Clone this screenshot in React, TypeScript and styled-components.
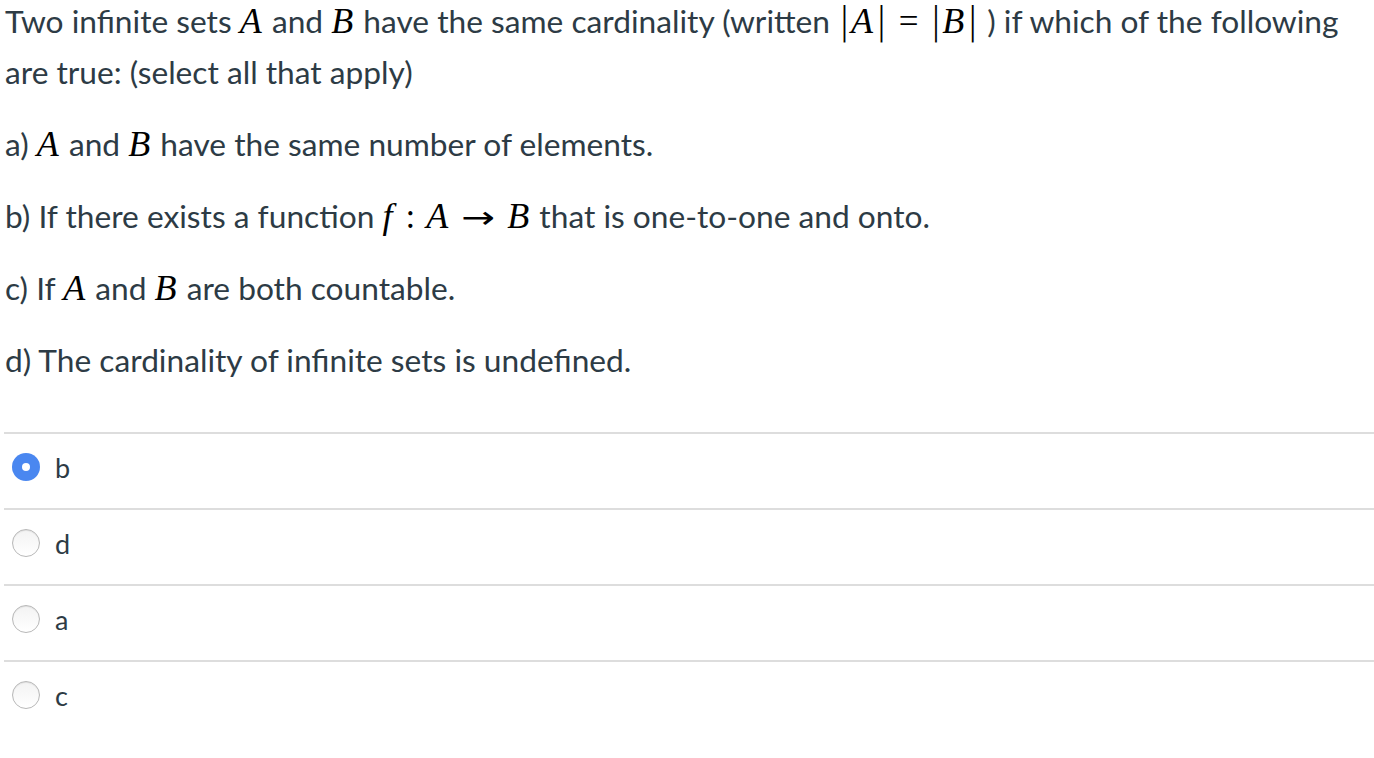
import React from "react"
import styled, { createGlobalStyle } from "styled-components"

const GlobalStyle = createGlobalStyle`
    html, body {
        margin: 0;
        padding: 0;
        background: #ffffff;
    }
    body {
        font-family: Lato, "Open Sans", sans-serif;
        color: #2d3b45;
    }
`;

interface Answer {
    id: string
    label: string
    checked: boolean
}

const answers: Answer[] = [
    { id: "ans-b", label: "b", checked: true },
    { id: "ans-d", label: "d", checked: false },
    { id: "ans-a", label: "a", checked: false },
    { id: "ans-c", label: "c", checked: false },
]

const V: React.FC<{ children: React.ReactNode }> = ({ children }) => <MathVar>{children}</MathVar>

const App: React.FC = () => {
    return (
        <>
            <GlobalStyle />
            <QuestionContainer>
                <QuestionText>
                    <Para>
                        Two infinite sets <V>A</V> and <V>B</V> have the same cardinality (written{" "}
                        <MathRun>
                            <Bar>|</Bar><V>A</V><Bar>|</Bar>
                            <MathOp>=</MathOp>
                            <Bar>|</Bar><V>B</V><Bar>|</Bar>
                        </MathRun>{" "}
                        ) if which of the following are true: (select all that apply)
                    </Para>
                    <Para>a) <V>A</V> and <V>B</V> have the same number of elements.</Para>
                    <Para>
                        b) If there exists a function{" "}
                        <MathRun>
                            <V>f</V>
                            <MathOp>:</MathOp>
                            <V>A</V>
                            <Arrow>→</Arrow>
                            <V>B</V>
                        </MathRun>{" "}
                        that is one-to-one and onto.
                    </Para>
                    <Para>c) If <V>A</V> and <V>B</V> are both countable.</Para>
                    <Para>d) The cardinality of infinite sets is undefined.</Para>
                </QuestionText>

                <AnswerList>
                    {answers.map((a) => (
                        <AnswerRow key={a.id}>
                            <Radio $checked={a.checked} />
                            <AnswerLabel>{a.label}</AnswerLabel>
                        </AnswerRow>
                    ))}
                </AnswerList>
            </QuestionContainer>
        </>
    )
}

const QuestionContainer = styled.div`
    display: flex;
    flex-direction: column;
    padding-left: 4px;
`;

const QuestionText = styled.div`
    padding: 0 0 25px 1px;
`;

const Para = styled.p`
    margin: 0 0 21px 0;
    font-size: 31.7px;
    line-height: 51px;

    &:first-child {
        margin-top: -4px;
    }
`;

const MathRun = styled.span`
    white-space: nowrap;
`;

const MathVar = styled.span`
    font-family: "Liberation Serif", "DejaVu Serif", serif;
    font-style: italic;
    font-size: 36px;
    color: #000000;
    line-height: 0;
    margin-right: 2px;
`;

const MathOp = styled.span`
    font-family: "Liberation Serif", "DejaVu Serif", serif;
    font-size: 35px;
    color: #000000;
    margin: 0 11px;
    line-height: 0;
`;

const Arrow = styled.span`
    display: inline-block;
    font-family: "DejaVu Sans", sans-serif;
    font-size: 31px;
    color: #000000;
    margin: 0 16px 0 15px;
    line-height: 0;
    transform: scaleX(1.3);
`;

const Bar = styled.span`
    font-family: "DejaVu Sans", sans-serif;
    font-size: 38px;
    color: #000000;
    font-weight: 300;
    line-height: 0;
`;

const AnswerList = styled.div`
    display: flex;
    flex-direction: column;
`;

const AnswerRow = styled.label`
    display: flex;
    align-items: center;
    gap: 15px;
    height: 74px;
    padding-left: 8px;
    border-top: 2px solid #dddddd;
    box-sizing: content-box;
`;

const Radio = styled.span<{ $checked: boolean }>`
    flex: none;
    width: 28px;
    height: 28px;
    margin-top: -8px;
    border-radius: 50%;
    box-sizing: border-box;
    position: relative;
    background: ${(p) => (p.$checked ? "#4a87f0" : "linear-gradient(#f3f3f3, #ffffff)")};
    border: ${(p) => (p.$checked ? "none" : "1.5px solid #b8b8b8")};
    box-shadow: ${(p) => (p.$checked ? "none" : "inset 0 1px 1px rgba(0, 0, 0, 0.08)")};

    &::after {
        content: "";
        display: ${(p) => (p.$checked ? "block" : "none")};
        position: absolute;
        left: 10px;
        top: 10px;
        width: 8px;
        height: 8px;
        border-radius: 50%;
        background: #ffffff;
    }
`;

const AnswerLabel = styled.span`
    font-size: 27px;
    margin-top: -8px;
`;

export default App
